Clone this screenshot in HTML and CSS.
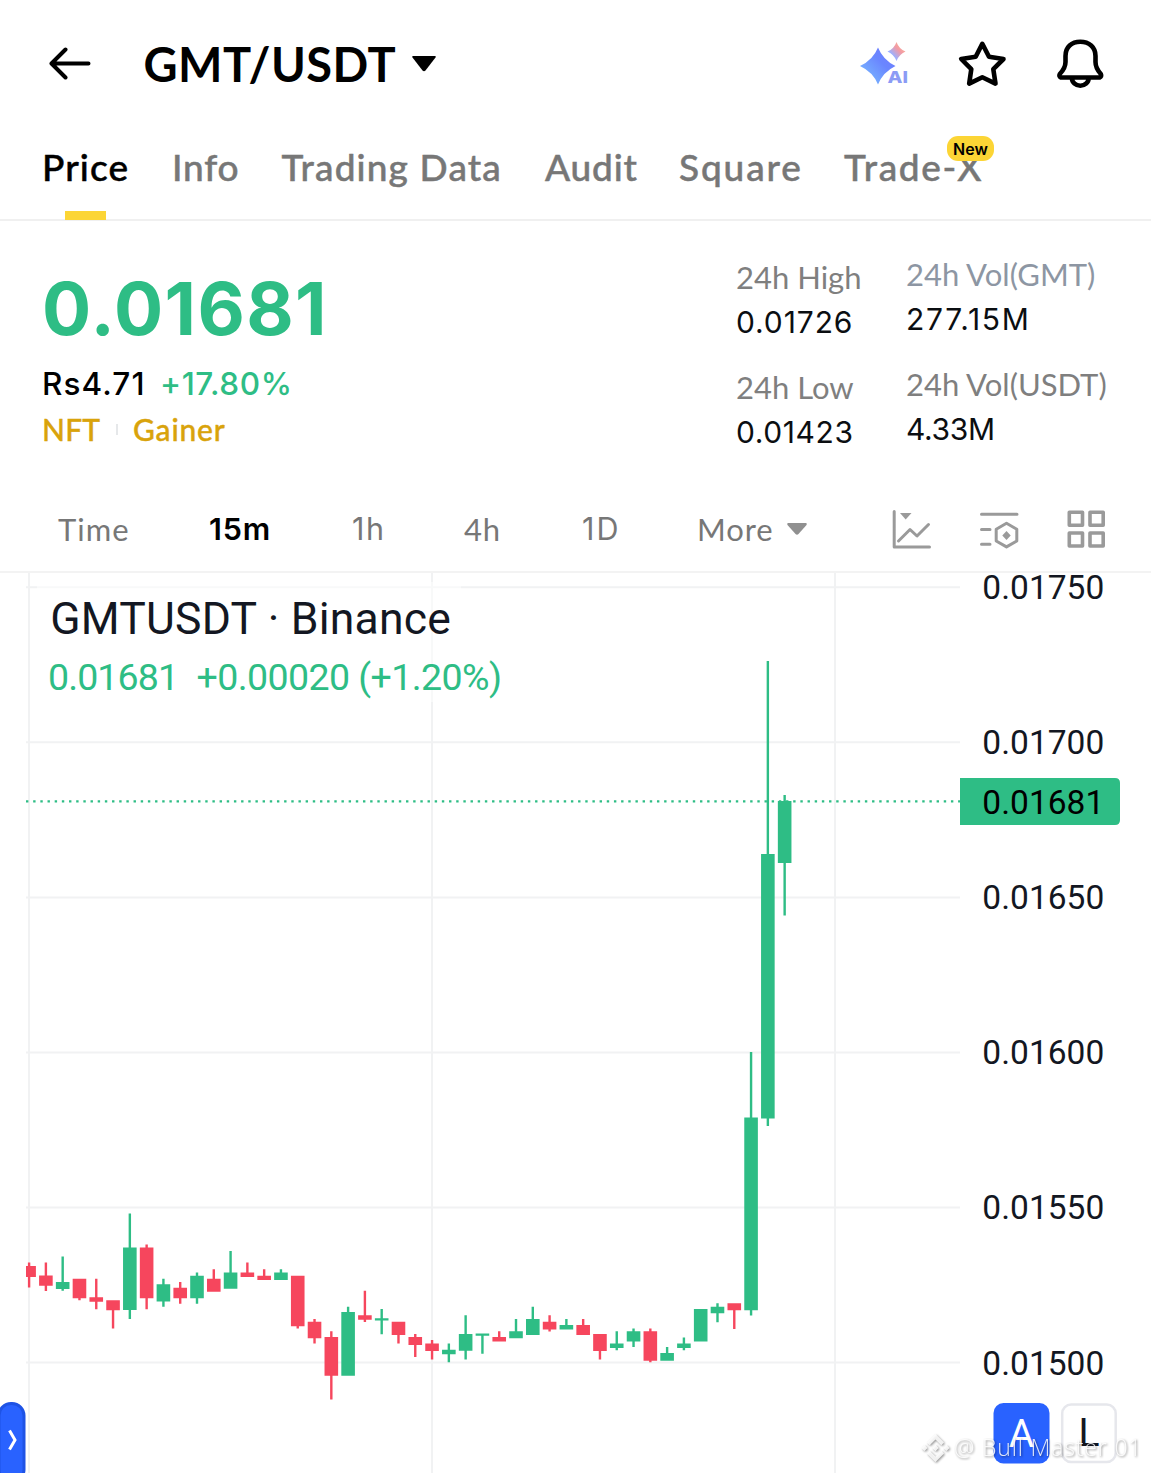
FILE: index.html
```
<!DOCTYPE html>
<html lang="en">
<head>
<meta charset="utf-8">
<title>GMT/USDT</title>
<link rel="stylesheet" href="styles.css">
</head>
<body>
<header class="header">
  <svg class="back" width="42" height="34" viewBox="49 47 42 34"><path d="M88.500 63.500H52M65.500 49.500L51.500 63.500L65.500 77.500"/></svg>
  <h1 class="title">GMT/USDT</h1>
  <svg class="caret" width="26" height="18" viewBox="0 0 26 18"><path d="M2 1h22q1.500 0 .5 1.500L14.500 15.500q-1.500 1.500-3 0L1.500 2.500Q.5 1 2 1z"/></svg>
  <div class="actions">
    <svg width="50" height="48" viewBox="858 40 50 48">
      <defs>
        <linearGradient id="g1" x1="0" y1="1" x2="1" y2="0"><stop offset="0" stop-color="#7cc4ff"/><stop offset=".6" stop-color="#6a86ff"/><stop offset="1" stop-color="#6f7bff"/></linearGradient>
        <linearGradient id="g2" x1="0" y1="1" x2="1" y2="0"><stop offset=".3" stop-color="#9db0ff"/><stop offset=".6" stop-color="#f29aa5"/><stop offset="1" stop-color="#ffc08a"/></linearGradient>
      </defs>
      <path fill="url(#g1)" d="M877 47.500Q882 60 894.500 66Q882 72 877 84.500Q872 72 859 66Q872 60 877 47.500z"/>
      <path fill="url(#g2)" d="M895.500 42Q898 49 904.500 51.500Q898 54.500 895.500 61Q893 54.500 886.500 51.500Q893 49 895.500 42z"/>
      <text class="ai" x="886.500" y="83" textLength="20.500" lengthAdjust="spacingAndGlyphs">AI</text>
    </svg>
    <svg class="line" width="50" height="50" viewBox="957 39 50 50"><path d="M982.300 43.800L989 56.800L1003.500 59L993.300 69.200L995.500 83.600L982.300 77.200L969.200 83.600L971.300 69.200L961.200 59L975.700 56.800z"/></svg>
    <svg class="line" width="50" height="50" viewBox="1055 38 50 50"><path d="M1061 76.500H1099.500Q1102 75.500 1100.800 73Q1095.500 67 1095.500 61V55C1095.500 46 1089 40.800 1080.300 40.800S1065.500 46 1065.500 55V61Q1065.500 67 1059.800 73Q1058.500 75.500 1061 76.500zM1072 77.500a8.300 7.200 0 0 0 16.600 0"/></svg>
  </div>
</header>
<nav class="tabs">
  <a class="tab t1 active">Price</a>
  <a class="tab t2">Info</a>
  <a class="tab t3">Trading Data</a>
  <a class="tab t4">Audit</a>
  <a class="tab t5">Square</a>
  <a class="tab t6">Trade-X<b class="badge">New</b></a>
</nav>
<section class="summary">
  <div class="quote">
    <div class="price">0.01681</div>
    <div class="change"><span class="rs">Rs4.71</span><span class="pct">+17.80%</span></div>
    <div class="tags"><span class="nft">NFT</span><i></i><span class="gain">Gainer</span></div>
  </div>
  <dl class="stats range">
    <dt>24h High</dt><dd class="high">0.01726</dd>
    <dt>24h Low</dt><dd class="low">0.01423</dd>
  </dl>
  <dl class="stats volume">
    <dt class="cool">24h Vol(GMT)</dt><dd class="base">277.15M</dd>
    <dt>24h Vol(USDT)</dt><dd class="quoted">4.33M</dd>
  </dl>
</section>
<div class="frames">
  <span class="f f1">Time</span>
  <span class="f f2">15m</span>
  <span class="f f3">1h</span>
  <span class="f f4">4h</span>
  <span class="f f5">1D</span>
  <span class="f f6">More</span>
  <svg class="more" width="22" height="14" viewBox="786 522 22 14"><path d="M788 523H806Q807.500 523.500 806.500 525L798.500 534Q797 535.500 795.500 534L787.500 525Q786.500 523.500 788 523z"/></svg>
  <svg class="tool chart-ico" width="42" height="42" viewBox="891 509 42 42"><path d="M894.200 511.500V547H929.500M898.500 541L910 529.500L917 536L928.500 524.500"/><path class="solid" d="M900 513H911.500L905.700 519.500z"/></svg>
  <svg class="tool set-ico" width="42" height="42" viewBox="978 509 42 42"><path d="M981.500 514.300H1017M981.500 529.500H990M981.500 544.300H990M1006.500 523.300L1016.800 529.200V541L1006.500 546.900L996.200 541V529.200z"/><path class="solid" d="M1006.500 531L1010.700 535.500L1006.500 540L1002.300 535.500z"/></svg>
  <svg class="tool grid-ico" width="42" height="42" viewBox="1065 509 42 42"><path d="M1069.300 512.300h13.200v13h-13.200zM1090 512.300h13.200v13H1090zM1069.300 533h13.200v13h-13.200zM1090 533h13.200v13H1090z"/></svg>
</div>
<svg class="chart" width="1151" height="900" viewBox="0 573 1151 900">
  <path class="grid" d="M29 573V1473M432 573V1473M835 573V1473M26 587.300H960M26 742.300H960M26 897.500H960M26 1052.500H960M26 1207.500H960M26 1362.500H960"/>
  <rect class="veil" x="37" y="582" width="424" height="120"/>
  <path class="last" d="M26 801.300H960"/>
  <g id="candles"></g>
  <text class="symbol" x="50.300" y="633.500" textLength="400.500">GMTUSDT · Binance</text>
  <g class="legend">
    <text x="48" y="690" textLength="131">0.01681</text>
    <text x="196.500" y="690" textLength="305.500">+0.00020 (+1.20%)</text>
  </g>
  <path class="pill" d="M960 778H1115q5 0 5 5V820q0 5-5 5H960z"/>
  <g class="axis">
    <text x="982.300" y="599.300" textLength="122">0.01750</text>
    <text x="982.300" y="754.300" textLength="122">0.01700</text>
    <text class="now" x="982.300" y="813.800" textLength="122">0.01681</text>
    <text x="982.300" y="909.300" textLength="122">0.01650</text>
    <text x="982.300" y="1064.300" textLength="122">0.01600</text>
    <text x="982.300" y="1219.300" textLength="122">0.01550</text>
    <text x="982.300" y="1374.500" textLength="122">0.01500</text>
  </g>
  <rect class="handle" x="-1" y="1403.500" width="25" height="78" rx="12"/>
  <path class="chev" d="M9.500 1430.500L15 1440L9.500 1449.500"/>
  <rect class="auto" x="993.500" y="1403" width="56" height="60.500" rx="10"/>
  <rect class="log" x="1062.200" y="1404.500" width="53.500" height="57.500" rx="9"/>
  <text class="key a" x="1021.500" y="1447">A</text>
  <text class="key l" x="1089" y="1446">L</text>
  <g class="mark">
    <path d="M927 1442.500L935.500 1434L944 1442.500L941.300 1445.200L935.500 1439.400L929.700 1445.200zM927 1453.500L935.500 1462L944 1453.500L941.300 1450.800L935.500 1456.600L929.700 1450.800zM921.500 1448l3-3l3 3l-3 3zM943.500 1448l3-3l3 3l-3 3zM932.300 1448l3.200-3.200l3.200 3.200l-3.200 3.200z"/>
    <text x="954" y="1456" textLength="187.500">@ Bull Master 01</text>
  </g>
</svg>
<script src="candles.js"></script>
</body>
</html>
```
FILE: styles.css
```
* { box-sizing: border-box; }
body { margin: 0; width: 1151px; height: 1473px; overflow: hidden; background: #fff; color: #0b0e11; font-family: Lato, "Open Sans", sans-serif; }
svg { display: block; flex: none; }
.header { display: flex; align-items: center; height: 128px; padding: 0 46px 0 49px; }
.back { fill: none; stroke: #000; stroke-width: 4; stroke-linecap: round; stroke-linejoin: round; }
.title { margin: 0 0 0 52.5px; width: 254.5px; font-size: 47px; line-height: 56px; font-weight: 700; letter-spacing: .45px; white-space: nowrap; color: #000; }
.caret { margin-left: 13px; }
.actions { display: flex; align-items: center; gap: 48px; margin-left: auto; }
.ai { font: 800 16.500px Inter, sans-serif; fill: #8b9bf5; }
.line { fill: none; stroke: #000; stroke-width: 4.600; stroke-linejoin: round; }
.tabs { display: flex; height: 93px; padding: 18px 0 0 42px; border-bottom: 2px solid #f0f0f0; font-size: 37px; line-height: 41px; font-weight: 500; color: #777; white-space: nowrap; -webkit-text-stroke: .5px; }
.tab { position: relative; flex: none; }
.t1 { width: 130px; letter-spacing: 1.1px; }
.t2 { width: 109.5px; letter-spacing: .8px; }
.t3 { width: 263.5px; letter-spacing: 1.15px; }
.t4 { width: 134px; letter-spacing: .8px; }
.t5 { width: 165px; letter-spacing: 1.9px; }
.t6 { letter-spacing: 1.7px; }
.active { color: #000; }
.active::after { content: ""; display: block; width: 41px; height: 9px; margin: 24px 0 0 23px; background: #fcd535; }
.badge { position: absolute; left: 103px; top: -10px; width: 47px; height: 25px; border-radius: 11px; background: #fcd535; color: #000; font: 600 16px/26px Inter, sans-serif; letter-spacing: 0; text-align: center; -webkit-text-stroke: 0; }
.summary { display: flex; height: 266px; padding: 0 0 0 42px; white-space: nowrap; }
.quote { width: 694px; padding-top: 48px; }
.price { font: 650 73px/80px Inter, sans-serif; letter-spacing: 1.35px; color: #2ebd85; }
.change { display: flex; margin-top: 12px; font: 500 31.500px/46px Inter, sans-serif; color: #000; }
.rs { width: 118px; letter-spacing: 1.1px; }
.pct { letter-spacing: .6px; color: #2ebd85; }
.tags { display: flex; align-items: center; font-size: 30px; line-height: 44px; font-weight: 500; color: #d9a30b; -webkit-text-stroke: .4px; }
.nft { width: 74px; letter-spacing: .2px; }
.gain { letter-spacing: .8px; }
.tags i { width: 2px; height: 11px; margin-right: 15px; background: #e6e8ea; }
.stats { margin: 0; font-size: 31px; line-height: 44px; }
.range { width: 170px; padding-top: 34px; }
.volume { padding-top: 31px; }
.stats dt { color: #7f7f7f; height: 45px; }
.stats .cool { color: #8d96a3; }
.stats dd { margin: 0 0 21px; height: 44px; font: 400 30px/44px Inter, sans-serif; }
.high { letter-spacing: .9px; }
.low { letter-spacing: .6px; }
.base { letter-spacing: 1.7px; }
.quoted { letter-spacing: -.3px; }
.frames { display: flex; align-items: center; height: 86px; padding-left: 58px; border-bottom: 2px solid #f3f3f3; font-size: 31px; line-height: 40px; color: #777; white-space: nowrap; }
.f { flex: none; }
.f1 { width: 151px; letter-spacing: 1px; }
.f2 { width: 143px; font: 600 30.500px/40px Inter, sans-serif; letter-spacing: .8px; color: #000; }
.f3 { width: 112px; font: 400 30.500px/40px Inter, sans-serif; letter-spacing: 1.5px; }
.f4 { width: 118px; letter-spacing: .8px; }
.f5 { width: 115px; font: 400 30.500px/40px Inter, sans-serif; letter-spacing: 2px; }
.f6 { width: 89px; letter-spacing: .9px; }
.more { fill: #909090; }
.tool { margin-top: 2px; fill: none; stroke: #9a9a9a; stroke-width: 3; stroke-linecap: round; stroke-linejoin: round; }
.solid { fill: #9a9a9a; stroke: none; }
.chart-ico { margin-left: 83px; }
.set-ico, .grid-ico { margin-left: 45px; }
.grid-ico { stroke-width: 3.600; }
.chart { overflow: visible; font-family: Roboto, sans-serif; }
.grid { stroke: #f1f2f3; stroke-width: 2; }
.veil { fill: #fff; fill-opacity: .5; }
.last { stroke: #2ebd85; stroke-width: 2.200; stroke-dasharray: 2.400 4.770; }
.up { fill: #2ebd85; }
.down { fill: #f6465d; }
.symbol { font-size: 44.500px; fill: #131722; }
.legend { font-size: 37.500px; fill: #2ebd85; }
.pill { fill: #2ebd85; }
.axis { font-size: 33.500px; fill: #131722; }
.axis .now { fill: #000; }
.handle { fill: #2962ff; stroke: #1e53e5; stroke-width: 3; }
.chev { fill: none; stroke: #fff; stroke-width: 3; }
.auto { fill: #2962ff; }
.log { fill: #fff; stroke: #e6e7ec; stroke-width: 2.500; }
.key { font-size: 39px; text-anchor: middle; }
.a { fill: #fff; }
.l { fill: #131722; }
.mark { fill: #fff; fill-opacity: .85; font: 300 23px "Open Sans", "Noto Sans", sans-serif; filter: drop-shadow(1px 1px .8px rgba(0,0,0,.5)); }
```
FILE: candles.js
```
const first = 29.1, step = 16.79, body = 13.6;
// [direction, body top, body bottom, wick top, wick bottom]
const data = [
  [0,1266,1277,1262.5,1287.5],[0,1275.5,1285.7,1262.5,1291],[1,1282,1289,1256.5,1290.7],[0,1278.7,1298.3,1278.7,1300.3],
  [0,1297.3,1301.7,1278.7,1309.3],[0,1300.3,1310.3,1300.3,1328.5],[1,1247.5,1310,1213.5,1319],[0,1247.5,1298.3,1244.5,1309.3],
  [1,1284.3,1301.5,1278.7,1306.7],[0,1287.7,1298.3,1282,1303.7],[1,1275.7,1298.3,1272.5,1303.7],[0,1278.7,1291.7,1269.3,1291.7],
  [1,1272.5,1288.7,1251,1288.7],[0,1272.5,1277,1262.5,1277],[0,1275.7,1280,1269.3,1280],[1,1272.5,1280,1269.3,1280],
  [0,1275.7,1326.2,1275.7,1328.5],[0,1321.7,1338.3,1319,1343.5],[0,1337,1375.7,1331.3,1399.5],[1,1312,1375.7,1306.7,1375.7],
  [0,1315.3,1319.7,1290.7,1322],[1,1318.3,1320.5,1309,1334.3],[0,1321.7,1335,1321.7,1343.5],[0,1337,1345,1334,1357],
  [0,1343.5,1351,1340,1359.5],[1,1349.7,1354.3,1343.5,1362.3],[1,1334,1350.7,1315.3,1359.5],[1,1333.5,1335.7,1333.5,1353.7],
  [0,1337,1341.5,1331.3,1341.5],[1,1331.3,1338.3,1319,1338.3],[1,1319,1335,1306.7,1335],[0,1321.7,1329.5,1315.3,1331.5],
  [1,1325,1329.5,1319,1329.5],[0,1325,1335,1319,1335],[0,1334,1351,1334,1359.5],[1,1343.5,1348,1331.3,1350.3],
  [1,1331.3,1341.5,1328.5,1347],[0,1331.3,1360.7,1328.5,1362.3],[1,1353,1360.7,1347,1360.7],[1,1343.5,1348,1337.5,1350.3],
  [1,1309,1341.5,1309,1341.5],[1,1306.7,1313.3,1303.3,1322.3],[0,1303.3,1310.3,1303.3,1329],[1,1117.5,1310.3,1052,1315.5],
  [1,854,1118.5,661,1126],[1,801,863,795,915.5]
];
document.getElementById("candles").innerHTML = data.map(([up, t, b, h, l], i) => {
  const c = first + step * i;
  const left = Math.max(26, c - body / 2);
  return `<path class="${up ? "up" : "down"}" d="M${left} ${t}H${c + body / 2}V${b}H${left}zM${c - 1.2} ${h}h2.4V${l}h-2.400z"/>`;
}).join("");
```
